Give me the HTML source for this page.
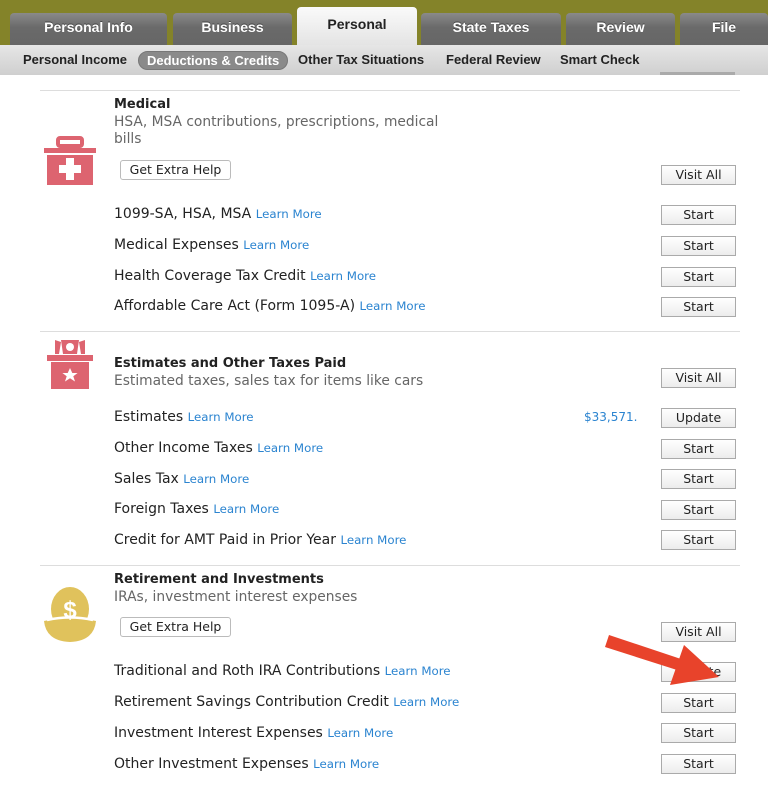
<!DOCTYPE html>
<html><head><meta charset="utf-8"><style>
*{margin:0;padding:0;box-sizing:border-box}
body{width:768px;height:788px;overflow:hidden;background:#fff;font-family:"DejaVu Sans","Liberation Sans",sans-serif;position:relative;color:#222}
.top{position:absolute;left:0;top:0;width:768px;height:45px;background:#848329}
.tab{position:absolute;top:13px;height:32px;background:linear-gradient(#8a8a8a,#6a6a6a 45%,#666);border-radius:4px 4px 0 0;color:#fff;font-weight:bold;font-size:14px;text-align:center;line-height:28px;text-shadow:0 -1px 0 #444;font-family:"Liberation Sans",sans-serif}
.tab.on{top:7px;height:38px;background:linear-gradient(#fafafa,#e4e4e4);color:#222;text-shadow:none;line-height:34px}
.sub{position:absolute;left:0;top:45px;width:768px;height:30px;background:linear-gradient(#e6e6e6,#cfcfcf);font-size:13px;font-weight:bold;color:#222;font-family:"Liberation Sans",sans-serif}
.sub span{position:absolute;top:7px}
.pill{background:#8a8a8a;color:#fff;border-radius:10px;padding:1px 8px;top:6px!important;border:1px solid #777}
.hr{position:absolute;left:40px;width:700px;height:1px;background:#ddd}
.t{position:absolute;left:114px;font-size:14px;white-space:nowrap}
.t a{color:#2b84d0;font-size:11.8px;text-decoration:none}
.h{position:absolute;left:114px;font-size:13px;font-weight:bold;margin-top:1px}
.d{position:absolute;left:114px;font-size:13.8px;color:#666;line-height:17px;width:335px}
.b{position:absolute;left:661px;width:75px;height:20px;border:1px solid #aaa;background:linear-gradient(#fff,#ececec);font-size:12.5px;text-align:center;line-height:18px;color:#222}
.g{position:absolute;left:120px;width:111px;height:20px;border:1px solid #bbb;border-radius:3px;background:#fff;font-size:12.5px;text-align:center;line-height:18px}
</style></head><body>
<div class="top"></div>
<div class="tab" style="left:10px;width:157px">Personal Info</div>
<div class="tab" style="left:173px;width:119px">Business</div>
<div class="tab on" style="left:297px;width:120px">Personal</div>
<div class="tab" style="left:421px;width:140px">State Taxes</div>
<div class="tab" style="left:566px;width:109px">Review</div>
<div class="tab" style="left:680px;width:88px">File</div>
<div class="sub">
<span style="left:23px">Personal Income</span>
<span class="pill" style="left:138px">Deductions &amp; Credits</span>
<span style="left:298px">Other Tax Situations</span>
<span style="left:446px">Federal Review</span>
<span style="left:560px">Smart Check</span>
<div style="position:absolute;left:660px;top:27px;width:75px;height:3px;background:#aaa"></div>
</div>

<div class="hr" style="top:90px"></div>
<svg style="position:absolute;left:44px;top:136px" width="52" height="50"><rect x="14" y="2" width="24" height="8" rx="2" fill="none" stroke="#dd6470" stroke-width="4"/><rect x="0" y="12" width="52" height="5" fill="#dd6470"/><rect x="3" y="19" width="46" height="30" fill="#dd6470"/><path d="M22 22h8v7h7v8h-7v7h-8v-7h-7v-8h7z" fill="#fff"/></svg>
<div class="h" style="top:96px">Medical</div>
<div class="d" style="top:114px">HSA, MSA contributions, prescriptions, medical bills</div>
<div class="g" style="top:160px">Get Extra Help</div>
<div class="b" style="top:165px">Visit All</div>
<div class="t" style="top:206px">1099-SA, HSA, MSA <a>Learn More</a></div><div class="b" style="top:205px">Start</div>
<div class="t" style="top:237px">Medical Expenses <a>Learn More</a></div><div class="b" style="top:236px">Start</div>
<div class="t" style="top:268px">Health Coverage Tax Credit <a>Learn More</a></div><div class="b" style="top:267px">Start</div>
<div class="t" style="top:298px">Affordable Care Act (Form 1095-A) <a>Learn More</a></div><div class="b" style="top:297px">Start</div>

<div class="hr" style="top:331px"></div>
<svg style="position:absolute;left:47px;top:338px" width="46" height="52"><path d="M8 2l6 2-2 12h-4z M38 2l-6 2 2 12h4z" fill="#dd6470"/><path d="M14 2h18l-2 14h-14z" fill="#dd6470"/><circle cx="23" cy="9" r="4" fill="#fff"/><rect x="0" y="17" width="46" height="6" fill="#dd6470"/><rect x="4" y="24" width="38" height="27" fill="#dd6470"/><path d="M23 30l2.3 5h5.3l-4.3 3.2 1.7 5.3-5-3.3-5 3.3 1.7-5.3-4.3-3.2h5.3z" fill="#fff"/></svg>
<div class="h" style="top:355px">Estimates and Other Taxes Paid</div>
<div class="d" style="top:373px">Estimated taxes, sales tax for items like cars</div>
<div class="b" style="top:368px">Visit All</div>
<div class="t" style="top:409px">Estimates <a>Learn More</a></div>
<div style="position:absolute;left:584px;top:410px;font-size:12px;color:#2b84d0">$33,571.</div>
<div class="b" style="top:408px">Update</div>
<div class="t" style="top:440px">Other Income Taxes <a>Learn More</a></div><div class="b" style="top:439px">Start</div>
<div class="t" style="top:471px">Sales Tax <a>Learn More</a></div><div class="b" style="top:469px">Start</div>
<div class="t" style="top:501px">Foreign Taxes <a>Learn More</a></div><div class="b" style="top:500px">Start</div>
<div class="t" style="top:532px">Credit for AMT Paid in Prior Year <a>Learn More</a></div><div class="b" style="top:530px">Start</div>

<div class="hr" style="top:565px"></div>
<svg style="position:absolute;left:44px;top:585px" width="52" height="58"><ellipse cx="26" cy="24" rx="19" ry="22" fill="#e0c25c"/><path d="M0 36q26 -6 52 0q-2 20 -26 21q-24 -1 -26 -21z" fill="#e0c25c"/><path d="M3 35q23 -5 46 0" stroke="#fff" stroke-width="2.5" fill="none"/><text x="26" y="33" font-size="24" font-weight="bold" fill="#fff" text-anchor="middle" font-family="Liberation Sans,sans-serif">$</text></svg>
<div class="h" style="top:571px">Retirement and Investments</div>
<div class="d" style="top:589px">IRAs, investment interest expenses</div>
<div class="g" style="top:617px">Get Extra Help</div>
<div class="b" style="top:622px">Visit All</div>
<div class="t" style="top:663px">Traditional and Roth IRA Contributions <a>Learn More</a></div><div class="b" style="top:662px">Update</div>
<div class="t" style="top:694px">Retirement Savings Contribution Credit <a>Learn More</a></div><div class="b" style="top:693px">Start</div>
<div class="t" style="top:725px">Investment Interest Expenses <a>Learn More</a></div><div class="b" style="top:723px">Start</div>
<div class="t" style="top:756px">Other Investment Expenses <a>Learn More</a></div><div class="b" style="top:754px">Start</div>

<svg style="position:absolute;left:0;top:0" width="768" height="788"><path d="M609 635L681 659L677 670L605 647Z" fill="#e8432b"/><path d="M684 645L719 677L670 685Z" fill="#e8432b"/></svg>
</body></html>
